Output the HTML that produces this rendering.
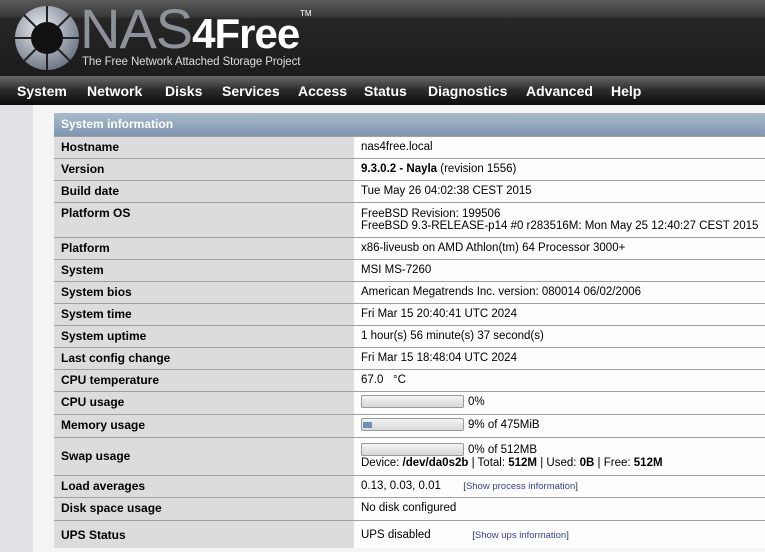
<!DOCTYPE html>
<html><head><meta charset="utf-8"><style>
*{margin:0;padding:0;box-sizing:border-box}
body{width:765px;height:552px;overflow:hidden;background:#f4f4f4;font-family:"Liberation Sans",sans-serif;position:relative}
#hdr{position:absolute;left:0;top:0;width:765px;height:76px;background:linear-gradient(#5a5a5a 0,#3a3a3a 16px,#262626 19px,#1c1c1c 76px)}
#nav{position:absolute;left:0;top:76px;width:765px;height:29px;background:linear-gradient(#6a6a6a,#2a2a2a 50%,#0c0c0c)}
#nav span{position:absolute;top:7px;color:#fff;font-weight:bold;font-size:14px;font-family:"Liberation Sans",sans-serif}
#left{position:absolute;left:0;top:105px;width:33px;height:447px;background:#dfe1e5}
table{position:absolute;left:54px;top:113px;width:711px;border-collapse:collapse;table-layout:fixed;font-size:11.5px;color:#000}
th{height:23px;text-align:left;padding-left:7px;color:#fff;font-size:12px;background:linear-gradient(#a9bbcd,#7f96ae)}
td{border-top:1px solid #a0a0a0;vertical-align:top;padding:3px 7px 0;line-height:14px;white-space:nowrap;overflow:hidden}
td.l{width:300px;background:#dcdcdc;font-weight:bold;font-size:12px}
td.v{background:#fdfdfd}
.bar{display:inline-block;width:103px;height:13px;border:1px solid #999;border-radius:2px;background:linear-gradient(#f4f4f4,#d8d8d8);vertical-align:-3px;margin-right:4px;position:relative}
.lnk{font-size:9.5px;color:#333}.lnk a{color:#334499}
</style></head><body>
<div id="hdr">
<svg width="80" height="76" style="position:absolute;left:9px;top:1px" viewBox="0 0 80 76">
<defs><radialGradient id="g" cx="0.4" cy="0.35" r="0.7"><stop offset="0" stop-color="#e8ecf2"/><stop offset="1" stop-color="#6a7280"/></radialGradient></defs>
<circle cx="38" cy="37" r="32" fill="url(#g)"/>
<circle cx="38" cy="37" r="16" fill="#111"/>
<g stroke="#222" stroke-width="2"><line x1="38" y1="5" x2="38" y2="21"/><line x1="38" y1="53" x2="38" y2="69"/><line x1="6" y1="37" x2="22" y2="37"/><line x1="54" y1="37" x2="70" y2="37"/><line x1="15" y1="14" x2="27" y2="26"/><line x1="49" y1="48" x2="61" y2="60"/><line x1="61" y1="14" x2="49" y2="26"/><line x1="27" y1="48" x2="15" y2="60"/></g>
</svg>
<div style="position:absolute;left:80px;top:-4px;font-family:'Liberation Sans',sans-serif;font-size:56px;white-space:nowrap"><span style="color:#8d929a;font-weight:normal;letter-spacing:-1px">NAS</span><span style="color:#fff;font-weight:bold;font-size:42px;letter-spacing:-1px">4Free</span></div>
<div style="position:absolute;left:300px;top:9px;color:#fff;font-size:8px">TM</div>
<div style="position:absolute;left:82px;top:56px;color:#ddd;font-size:11.5px;letter-spacing:-0.1px">The Free Network Attached Storage Project</div>
</div>
<div id="nav"><span style="left:17px">System</span><span style="left:87px">Network</span><span style="left:165px">Disks</span><span style="left:222px">Services</span><span style="left:298px">Access</span><span style="left:364px">Status</span><span style="left:428px">Diagnostics</span><span style="left:526px">Advanced</span><span style="left:611px">Help</span></div>
<div id="left"></div>
<table>
<colgroup><col style="width:300px"><col></colgroup>
<tr><th colspan="2">System information</th></tr>
<tr style="height:22px"><td class="l">Hostname</td><td class="v">nas4free.local</td></tr>
<tr style="height:22px"><td class="l">Version</td><td class="v"><b>9.3.0.2 - Nayla</b> (revision 1556)</td></tr>
<tr style="height:22px"><td class="l">Build date</td><td class="v">Tue May 26 04:02:38 CEST 2015</td></tr>
<tr style="height:35px"><td class="l">Platform OS</td><td class="v" style="line-height:12px;padding-top:5px">FreeBSD Revision: 199506<br>FreeBSD 9.3-RELEASE-p14 #0 r283516M: Mon May 25 12:40:27 CEST 2015</td></tr>
<tr style="height:22px"><td class="l">Platform</td><td class="v">x86-liveusb on AMD Athlon(tm) 64 Processor 3000+</td></tr>
<tr style="height:22px"><td class="l">System</td><td class="v">MSI MS-7260</td></tr>
<tr style="height:22px"><td class="l">System bios</td><td class="v">American Megatrends Inc. version: 080014 06/02/2006</td></tr>
<tr style="height:22px"><td class="l">System time</td><td class="v">Fri Mar 15 20:40:41 UTC 2024</td></tr>
<tr style="height:22px"><td class="l">System uptime</td><td class="v">1 hour(s) 56 minute(s) 37 second(s)</td></tr>
<tr style="height:22px"><td class="l">Last config change</td><td class="v">Fri Mar 15 18:48:04 UTC 2024</td></tr>
<tr style="height:22px"><td class="l">CPU temperature</td><td class="v">67.0 &nbsp;&nbsp;°C</td></tr>
<tr style="height:23px"><td class="l">CPU usage</td><td class="v"><span class="bar"></span>0%</td></tr>
<tr style="height:23px"><td class="l">Memory usage</td><td class="v"><span class="bar"><span style="position:absolute;left:1px;top:3px;width:9px;height:6px;background:#6d8fb8"></span></span>9% of 475MiB</td></tr>
<tr style="height:38px"><td class="l" style="vertical-align:middle;padding-top:0">Swap usage</td><td class="v" style="line-height:13px;padding-top:5px"><span class="bar"></span>0% of 512MB<br>Device: <b>/dev/da0s2b</b> | Total: <b>512M</b> | Used: <b>0B</b> | Free: <b>512M</b></td></tr>
<tr style="height:22px"><td class="l">Load averages</td><td class="v">0.13, 0.03, 0.01 &nbsp;&nbsp;&nbsp;&nbsp;&nbsp;&nbsp;<span class="lnk">[<a>Show process information</a>]</span></td></tr>
<tr style="height:23px"><td class="l">Disk space usage</td><td class="v">No disk configured</td></tr>
<tr style="height:28px"><td class="l" style="padding-top:7px">UPS Status</td><td class="v" style="padding-top:7px">UPS disabled &nbsp;&nbsp;&nbsp;&nbsp;&nbsp;&nbsp;&nbsp;&nbsp;&nbsp;&nbsp;&nbsp;&nbsp;<span class="lnk">[<a>Show ups information</a>]</span></td></tr>
</table>
</body></html>
